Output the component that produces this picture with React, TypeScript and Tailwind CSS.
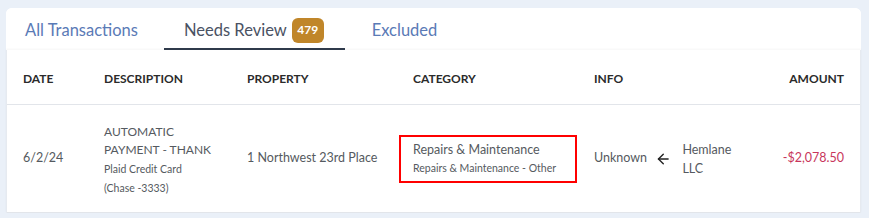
import { ArrowLeft } from "lucide-react";

const font = { fontFamily: "Lato, 'Noto Sans', sans-serif" };

function Tabs() {
  return (
    <div className="flex h-[42px] items-end rounded-t-md bg-white pl-[19px]">
      <button className="flex h-[40px] items-center pr-[26px] text-[16.5px] text-[#5a7ab6]">
        All Transactions
      </button>
      <button className="flex h-[38px] items-center gap-[5px] border-b-2 border-[#2f3a4b] pl-[20px] pr-[21px] text-[16.5px] text-[#4a5263]">
        Needs Review
        <span className="flex h-[25px] w-[32px] items-center justify-center rounded-[6px] bg-[#c0862a] text-[12px] font-bold text-white">
          479
        </span>
      </button>
      <button className="flex h-[40px] items-center pl-[27px] text-[16.5px] text-[#5a7ab6]">
        Excluded
      </button>
    </div>
  );
}

const cols = "grid grid-cols-[81px_143px_166px_181px_minmax(0,1fr)_110px]";

export default function App() {
  return (
    <div className="h-[218px] overflow-hidden bg-[#eaf0f8] pt-2 pl-[6px] pr-[8px]" style={font}>
      <div className="rounded-t-md bg-white">
        <Tabs />
        <div className="border-x border-[#e6eaf0] shadow-[0_-1px_2px_rgba(0,0,0,0.04)]">
          <div className={`${cols} h-[55px] items-center border-b border-[#e2e5ea] px-[16px] pt-[3px] text-[12px] font-bold text-[#2b2b2b]`}>
            <div>DATE</div>
            <div>DESCRIPTION</div>
            <div>PROPERTY</div>
            <div>CATEGORY</div>
            <div>INFO</div>
            <div className="text-right">AMOUNT</div>
          </div>
          <div className={`${cols} h-[108px] items-center border-b border-[#e2e5ea] px-[16px] text-[12.5px] text-[#555a60]`}>
            <div>6/2/24</div>
            <div className="pt-[3px] leading-[18px]">
              <div className="text-[12px]">AUTOMATIC</div>
              <div className="text-[12px]">PAYMENT - THANK</div>
              <div className="mt-[1px] text-[10.5px] leading-[19px]">Plaid Credit Card</div>
              <div className="text-[10.5px] leading-[19px]">(Chase -3333)</div>
            </div>
            <div>1 Northwest 23rd Place</div>
            <div>
              <div className="-ml-[14px] w-[178px] border-2 border-[#ff0000] py-[3px] pl-[12px] leading-[19px]">
                <div className="text-[12.5px]">Repairs &amp; Maintenance</div>
                <div className="text-[10.5px]">Repairs &amp; Maintenance - Other</div>
              </div>
            </div>
            <div className="flex items-center">
              <span className="w-[66px]">Unknown</span>
              <ArrowLeft size={18} strokeWidth={2} className="text-[#222]" />
              <span className="ml-[11px] w-[56px] leading-[19px]">Hemlane LLC</span>
            </div>
            <div className="text-right text-[#c8365b]">-$2,078.50</div>
          </div>
        </div>
      </div>
    </div>
  );
}
